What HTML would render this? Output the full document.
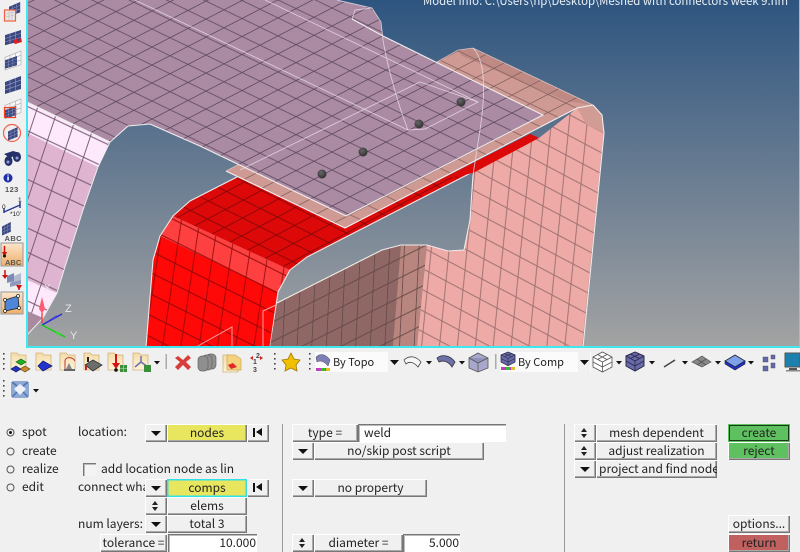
<!DOCTYPE html>
<html><head><meta charset="utf-8">
<style>
html,body{margin:0;padding:0;background:#f0f0f0}
#r{position:relative;width:800px;height:552px;overflow:hidden;background:#f0f0f0;font-family:"Noto Sans CJK JP","Liberation Sans",sans-serif;font-size:12px;color:#222}
svg{position:absolute;left:0;top:0}
.b,.t,.i{position:absolute;box-sizing:border-box;white-space:nowrap;overflow:hidden}
.b{background:#f0f0f0;text-align:center;box-shadow:inset 1px 1px 0 #fff,inset -1px -1px 0 #777,inset -2px -2px 0 #aaa;line-height:17px}
.y{background:#e8e65f}
.g{background:#5fc060}
.t{line-height:14px}
.i{background:#fff;box-shadow:inset 1px 1px 0 #777,inset 2px 2px 0 #bbb;line-height:18px;padding:0 1px}
.dn::after{content:"";position:absolute;left:6px;top:7px;width:0;height:0;border-style:solid;border-color:#111 transparent transparent;border-width:5px 5px 0}
.ud::before{content:"";position:absolute;left:7px;top:4px;width:0;height:0;border-style:solid;border-color:transparent transparent #222;border-width:0 3px 4px}
.ud::after{content:"";position:absolute;left:7px;top:10px;width:0;height:0;border-style:solid;border-color:#222 transparent transparent;border-width:4px 3px 0}
.fs::before{content:"";position:absolute;left:6px;top:4px;width:2px;height:9px;background:#111}
.fs::after{content:"";position:absolute;left:9px;top:4px;width:0;height:0;border-style:solid;border-color:transparent #111 transparent transparent;border-width:4.5px 6px 4.5px 0}
</style></head><body><div id="r">
<svg width="800" height="552" viewBox="0 0 800 552">
<defs>
<linearGradient id="bg" x1="0" y1="0" x2="0" y2="1"><stop offset="0" stop-color="#2e5580"/><stop offset="1" stop-color="#a3a3a3"/></linearGradient>
<linearGradient id="fo" x1="0" y1="0" x2="0" y2="1"><stop offset="0" stop-color="#f5dca8"/><stop offset="1" stop-color="#fdf4dc"/></linearGradient>
<linearGradient id="or" x1="0" y1="0" x2="0" y2="1"><stop offset="0" stop-color="#fbe6cc"/><stop offset="1" stop-color="#f0ae6a"/></linearGradient>
<pattern id="pPlate" patternUnits="userSpaceOnUse" width="100" height="100" patternTransform="matrix(.18 .087 .18 -.093 314 152.300)"><path d="M0 50H100M50 0V100" fill="none" stroke="#5c4a5e" stroke-width="5"/></pattern>
<pattern id="pLeft" patternUnits="userSpaceOnUse" width="100" height="100" patternTransform="matrix(.18 .085 -.07 .21 31 96)"><path d="M0 50H100M50 0V100" fill="none" stroke="#6f5468" stroke-width="4.500"/></pattern>
<pattern id="pRed" patternUnits="userSpaceOnUse" width="100" height="100" patternTransform="matrix(.17 .085 -.03 .2 171 229)"><path d="M0 50H100M50 0V100" fill="none" stroke="#8c0808" stroke-width="4.500"/></pattern>
<pattern id="pDark" patternUnits="userSpaceOnUse" width="100" height="100" patternTransform="matrix(.17 .085 .18 -.095 172 229)"><path d="M0 50H100M50 0V100" fill="none" stroke="#7c0808" stroke-width="5"/></pattern>
<pattern id="pBrown" patternUnits="userSpaceOnUse" width="100" height="100" patternTransform="matrix(.15 -.075 -.01 .2 277 310)"><path d="M0 50H100M50 0V100" fill="none" stroke="#5f4644" stroke-width="5"/></pattern>
<pattern id="pSal" patternUnits="userSpaceOnUse" width="100" height="100" patternTransform="matrix(.17 .09 -.02 .2 560.500 120.500)"><path d="M0 50H100M50 0V100" fill="none" stroke="#956c6c" stroke-width="5"/></pattern>
<pattern id="pFl" patternUnits="userSpaceOnUse" width="100" height="100" patternTransform="matrix(.18 .087 .18 -.093 314 152.300)"><path d="M0 50H100M50 0V100" fill="none" stroke="#86615d" stroke-width="5"/></pattern>
<g id="mesh"><polygon points="0,6 16,0 16,13 0,18" fill="#3b4880"/><path d="M0 10L16 4M0 14L16 8.500M5 4V16M10.500 2V15" stroke="#8a94c0" stroke-width=".7" fill="none"/></g>
<g id="wire"><path d="M0 6L16 0V13L0 18ZM0 10L16 4M0 14L16 8.500M5 4V16M10.500 2V15" stroke="#aaa" stroke-width=".6" fill="#f6f6f6"/></g>
<g id="fold"><path d="M1 3V1H7L9 3H16V18H1Z" fill="url(#fo)" stroke="#d2b27a" stroke-width=".8"/></g>
<path id="arr" d="M0 0H6L3 3.500Z" fill="#111"/>
<g id="cube3"><polygon points="9,0 18,4 18,14 9,19 0,14 0,4" fill="#6a6aa6" stroke="#2a2a50" stroke-width="1"/><path d="M0 4L9 9L18 4M9 9V19M4.500 2L13.500 6.500M13.500 2L4.500 6.500M0 9L9 14L18 9" stroke="#2a2a50" stroke-width=".8" fill="none"/></g>
<g id="grip" fill="#444"><rect x="0" y="0" width="1.600" height="1.600"/><rect x="0" y="5" width="1.600" height="1.600"/><rect x="0" y="10" width="1.600" height="1.600"/><rect x="0" y="15" width="1.600" height="1.600"/></g>
<radialGradient id="dot" cx=".4" cy=".35" r=".7"><stop offset="0" stop-color="#666"/><stop offset="1" stop-color="#2e2e2e"/></radialGradient>
</defs>

<!-- viewport -->
<rect x="27" y="0" width="772" height="347" fill="url(#bg)"/>

<!-- left flange -->
<polygon points="27,102 110,142 98,167 83,210 64,270 57,293 43,318 27,335" fill="#dfb4d0"/>
<polygon points="27,102 110,142 98,167 27,133" fill="#fde8fc"/>
<polygon points="27,280 57,293 43,318 27,311" fill="#fde8fc"/>
<polygon points="27,311 43,318 27,335" fill="#a98a9f"/>
<polygon points="27,102 110,142 98,167 83,210 64,270 57,293 43,318 27,311" fill="url(#pLeft)"/>
<path d="M27 102L110 142L98 167L83 210L64 270L57 293L43 318L27 335" fill="none" stroke="#eee" stroke-width="1"/>

<!-- red part -->
<polygon points="190,201 237,177 345,228 530,134 539,138 307,257 290,270 173,216" fill="#dd0808"/>
<polygon points="190,201 237,177 345,228 530,134 539,138 307,257 290,270 173,216" fill="url(#pDark)"/>
<polygon points="160,236 173,216 290,270 278,292" fill="#ff4040"/>
<polygon points="160,236 278,292 270,347 146,347 153,260" fill="#ff0808"/>
<polygon points="160,236 173,216 290,270 278,292 270,347 146,347 153,260" fill="url(#pRed)"/>
<path d="M146 347L153 260L160 236L173 216L190 201L237 177M539 138L307 257L290 270L278 292L270 347" fill="none" stroke="#f0e8e8" stroke-width="1.100"/>
<path d="M196 347L232 327V347M263 347V311L276 305" fill="none" stroke="#f5a0a0" stroke-width="1"/>

<!-- brown face -->
<polygon points="277,303 382,250 401,245 393,347 270,347" fill="#8f6866"/>
<polygon points="277,303 382,250 401,245 393,347 270,347" fill="url(#pBrown)"/>
<polygon points="401,245 427,245 417,347 393,347" fill="#b8857f"/>
<polygon points="401,245 427,245 417,347 393,347" fill="url(#pBrown)"/>

<!-- salmon face -->
<polygon points="427,245 448,251 464,250 470,220 473,172 539,138 577,108 593,105 604,133 583,347 417,347" fill="#eeaaa6"/>
<polygon points="427,245 448,251 464,250 470,220 473,172 539,138 577,108 593,105 604,133 583,347 417,347" fill="url(#pSal)"/>
<polygon points="577,108 593,105 602,115 604,133 586,124" fill="#d19c94"/>
<path d="M277 303L382 250L401 245L427 245L448 251L464 250L470 220L473 175M593 105L602 115L604 133L583 347" fill="none" stroke="#f0ecec" stroke-width="1.100"/>
<polygon points="473,173 539,138 530,134 440,180" fill="#dd0808"/>

<!-- top flange under plate -->
<polygon points="226,171 437,62 458,50 473,48 593,105 577,108 345,228" fill="#cf9a94"/>
<polygon points="473,48 593,105 566,101 462,56 458,50" fill="#bf8a84"/>
<polygon points="226,171 437,62 458,50 473,48 593,105 577,108 345,228" fill="url(#pFl)"/>
<path d="M226 171L345 228L577 108L593 105" fill="none" stroke="#f5f0f0" stroke-width="1.100"/>
<path d="M226 171L437 62L458 50L473 48L593 105" fill="none" stroke="#eadada" stroke-width=".8" stroke-opacity=".7"/>

<!-- main plate -->
<polygon points="27,0 337,0 372,8 381,22 383,36 543,115 346,216 200,146 150,124 128,126 110,142 27,102" fill="#ab8aa3"/>
<polygon points="27,0 337,0 372,8 381,22 383,36 543,115 346,216 200,146 150,124 128,126 110,142 27,102" fill="url(#pPlate)"/>
<path d="M352 19L383 36L543 115L346 216L200 146L150 124L128 126L110 142L27 102" fill="none" stroke="#eee" stroke-width="1.100"/>
<g fill="none" stroke="#e8dce6" stroke-width=".9" stroke-opacity=".8">
<path d="M337 0L372 8L381 22L383 40C388 70 400 110 408 130L425 129L478 102L265 0"/>
<path d="M135 0L408 130"/>
<path d="M352 19L355 10L372 8"/>
<path d="M240 170L420 82L478 102"/>
<path d="M473 48C485 60 486 90 480 130L473 175"/>
</g>
<g fill="url(#dot)"><circle cx="322" cy="174" r="4.500"/><circle cx="363" cy="152" r="4.500"/><circle cx="419" cy="124" r="4.500"/><circle cx="461" cy="102" r="4.500"/></g>

<!-- axes -->
<path d="M42 323V303" stroke="#ff3030" stroke-width="1.300"/><polygon points="42,297 45,309 42,313 39,309" fill="#ff5a70"/>
<path d="M42 325L62 314" stroke="#2525e0" stroke-width="1.300"/><polygon points="49,320 57,315 55,319" fill="#4040e0"/>
<path d="M42 325L65 337" stroke="#10d010" stroke-width="1.300"/><polygon points="54,330 62,334 58,335" fill="#30e030"/>
<g font-family="'Liberation Sans',sans-serif" font-size="10" fill="#e6e6e6"><text x="44" y="291">X</text><text x="65" y="312" font-size="11">Z</text><text x="70" y="339" font-size="11">Y</text></g>
<text x="423" y="5" font-size="12" fill="#e8eef4" textLength="370" lengthAdjust="spacingAndGlyphs">Model Info: C:\Users\hp\Desktop\Meshed with connectors week 9.hm*</text>

<!-- cyan frame -->
<rect x="26" y="0" width="2" height="348" fill="#3fe8ee"/>
<rect x="26" y="346" width="774" height="2" fill="#3fe8ee"/>
<rect x="799" y="0" width="1" height="348" fill="#3fe8ee"/>

<!-- left toolbar -->
<use href="#mesh" transform="translate(9 2) scale(.7 .8)"/><rect x="4.500" y="10" width="11" height="11" fill="#e8e8e8" stroke="#f06040" stroke-width="1.200"/><path d="M6 14L14 12M6 17L14 15M9 11V20M12 11V20" stroke="#bbb" stroke-width=".6"/>
<use href="#mesh" transform="translate(5 30) scale(1 .85)"/><path d="M13 42C18 43 20 41 21 37L22 42L15 44Z" fill="#e02020"/><path d="M13 41L17 38V44Z" fill="#e02020"/>
<use href="#wire" transform="translate(5 51) scale(1 1.050)"/><use href="#mesh" transform="translate(5 56) scale(.75 .7)"/>
<use href="#mesh" transform="translate(5 76)"/>
<use href="#wire" transform="translate(5 99) scale(1 1.050)"/><use href="#mesh" transform="translate(5 106) scale(.7 .7)"/><rect x="4.500" y="107.500" width="11" height="10" fill="none" stroke="#f04020" stroke-width="1.200"/>
<circle cx="12" cy="133" r="8.500" fill="#eee" stroke="#f06050" stroke-width="1.200"/><use href="#mesh" transform="translate(8 127) scale(.6 .75)"/>
<g fill="#25306a"><ellipse cx="8.500" cy="161" rx="4" ry="5"/><ellipse cx="17" cy="157" rx="4" ry="5"/><path d="M4 154L13 151L20 153L10 158Z"/></g><circle cx="8" cy="162" r="1.500" fill="#8fa0e0"/><circle cx="17" cy="158" r="1.500" fill="#8fa0e0"/>
<circle cx="8" cy="178" r="4.500" fill="#1c2fa8"/><rect x="7.300" y="176.500" width="1.500" height="4" fill="#fff"/><rect x="7.300" y="174.500" width="1.500" height="1" fill="#fff"/>
<g font-family="'Liberation Sans',sans-serif" font-weight="bold" fill="#555" font-size="7.500"><text x="5" y="192" letter-spacing=".4">123</text><text x="4.500" y="241" letter-spacing=".4">ABC</text></g>
<g font-family="'Liberation Sans',sans-serif" fill="#222" font-size="6.500"><text x="2" y="209">0</text><text x="18" y="202">1</text><text x="10" y="216">*10'</text></g>
<path d="M4 212L20 205M4 208V213M20 202V208" stroke="#2b3c90" stroke-width="1.500" fill="none"/>
<use href="#mesh" transform="translate(2 222) scale(.55 .75)"/>
<rect x="1" y="243" width="22" height="23" fill="url(#or)" stroke="#999" stroke-width="1"/><path d="M4.500 246V254" stroke="#d01010" stroke-width="1.500"/><polygon points="2,252 7,252 4.500,257" fill="#d01010"/><circle cx="4.500" cy="256" r="1.500" fill="#111"/><text x="5" y="265" font-family="'Liberation Sans',sans-serif" font-weight="bold" font-size="7.500" fill="#555">ABC</text>
<polygon points="7,276 14,273 14,281 7,283" fill="#7d8ab5"/><polygon points="10,283 21,277 21,284 10,287" fill="#8e99bb"/><polygon points="14,276 21,273 21,280 14,282" fill="#b3bacf"/><path d="M5 270V277" stroke="#d01010" stroke-width="1.500"/><polygon points="2,275 8,275 5,279" fill="#d01010"/><path d="M19 285V290" stroke="#d01010" stroke-width="1.500"/><polygon points="16,285 22,285 19,290" fill="#d01010"/>
<rect x="1" y="292" width="22" height="22" fill="url(#or)" stroke="#999" stroke-width="1"/><polygon points="5,300 18,296 19,308 5,311" fill="#4f87d8" stroke="#222" stroke-width=".8"/><g fill="#fff" stroke="#222" stroke-width=".7"><circle cx="5" cy="300" r="1.500"/><circle cx="18" cy="296" r="1.500"/><circle cx="19" cy="308" r="1.500"/><circle cx="5" cy="311" r="1.500"/></g>

<!-- toolbar row 1 -->
<use href="#grip" x="3" y="353"/>
<use href="#fold" x="10" y="352"/><polygon points="21,359 26,362 21,365 16,362" fill="#20b020" stroke="#145c14" stroke-width=".6"/><polygon points="16,366 21,369 16,372 11,369" fill="#2030c0" stroke="#101a60" stroke-width=".6"/><polygon points="25,366 30,369 25,372 20,369" fill="#c98a30" stroke="#604010" stroke-width=".6"/>
<use href="#fold" x="35" y="352"/><polygon points="43,361 52,366 43,371 38,366" fill="#2434d0" stroke="#111a70" stroke-width=".8"/>
<use href="#fold" x="59" y="352"/><path d="M65 369V361C65 357 72 356 75 361" fill="none" stroke="#c03030" stroke-width="1"/><path d="M66 369L69 363L72 369Z" fill="#888"/><rect x="64" y="369" width="11" height="2" fill="#666"/>
<use href="#fold" x="83" y="352"/><polygon points="93,360 102,365 93,371 85,365" fill="#6d6d6d" stroke="#333" stroke-width=".8"/><rect x="87" y="357" width="2" height="5" fill="#222"/><rect x="85" y="366" width="2" height="4" fill="#c02020"/>
<use href="#fold" x="107" y="352"/><path d="M116 354V365" stroke="#d81010" stroke-width="2"/><polygon points="112,363 120,363 116,369" fill="#d81010"/><circle cx="116" cy="370" r="1.800" fill="#111"/><rect x="120" y="365" width="7" height="7" fill="#3a8f3a"/><path d="M120 368.500H127M123.500 365V372" stroke="#bde0bd" stroke-width=".6"/>
<use href="#fold" x="132" y="352"/><path d="M141 362V356M141 362L135 367M141 362L148 367" stroke="#6a6fb0" stroke-width="1.500" fill="none"/><rect x="144" y="365" width="7" height="7" fill="#3a8f3a"/>
<use href="#arr" x="154" y="361"/>
<rect x="165.500" y="354" width="1.500" height="15" fill="#aaa"/>
<path d="M178 356L183 360L188 355L191 358L186 362L191 367L188 370L183 365L178 370L175 367L180 362L175 358Z" fill="#d83c3c"/>
<g fill="#8f8f8f" stroke="#666" stroke-width=".7"><rect x="206" y="354" width="10" height="15" rx="4"/><rect x="202" y="355" width="10" height="15" rx="4"/><rect x="198" y="356" width="10" height="15" rx="4"/></g>
<use href="#fold" x="222" y="354"/><path d="M227 355H235L241 359V370H227Z" fill="#f5d27e" stroke="#c9a45a" stroke-width=".7"/><path d="M228 365L233 363L237 367L231 369Z" fill="#e02828"/>
<g font-family="'Liberation Sans',sans-serif" font-size="7" font-weight="bold" fill="#444"><text x="256" y="358">2</text><text x="253" y="364">1</text><text x="253" y="372">3</text></g><path d="M250 358L253 356V360ZM263 358L260 356V360Z" fill="#d02020"/>
<use href="#grip" x="274" y="353"/>
<polygon points="291,353 294,359 300,360 296,365 297,371 291,368 285,371 286,365 282,360 288,359" fill="#f0c000" stroke="#a07800" stroke-width=".8"/>
<use href="#grip" x="309" y="353"/>
<rect x="315" y="352" width="85" height="20" fill="#fbfbfb"/><rect x="388" y="352" width="12" height="20" fill="#f0f0f0"/>
<path d="M316 357C320 353 326 354 330 360L328 366C324 361 320 360 317 362Z" fill="#7d80b8" stroke="#444" stroke-width=".5"/><rect x="316" y="368" width="14" height="3" fill="#c040c0"/><rect x="321" y="368" width="4" height="3" fill="#30c030"/><rect x="326" y="368" width="4" height="3" fill="#e0c020"/>
<polygon points="390,360 399,360 394.500,365" fill="#111"/>
<text x="333" y="366" font-size="11" fill="#222">By Topo</text>
<path d="M404 360C409 355 416 356 421 362L418 367C414 362 409 361 406 364Z" fill="#f6f6f6" stroke="#444" stroke-width=".8"/><use href="#arr" x="426" y="361"/>
<path d="M437 358C442 354 450 355 455 362L452 367C448 361 443 360 439 362Z" fill="#6e70a8" stroke="#333" stroke-width=".8"/><use href="#arr" x="459" y="361"/>
<polygon points="478,353 488,358 488,368 478,372 469,368 469,358" fill="#a8a8cc" stroke="#555" stroke-width=".8"/><path d="M469 358L478 363L488 358M478 363V372" stroke="#555" stroke-width=".8" fill="#9090bb"/>
<rect x="495" y="354" width="1.500" height="15" fill="#aaa"/>
<rect x="500" y="352" width="91" height="20" fill="#fbfbfb"/><rect x="578" y="352" width="12" height="20" fill="#f0f0f0"/>
<use href="#cube3" transform="translate(501 352) scale(.78 .72)"/><rect x="501" y="367" width="14" height="3" fill="#c040c0"/><rect x="506" y="367" width="4" height="3" fill="#30c030"/><rect x="511" y="367" width="4" height="3" fill="#e0c020"/>
<polygon points="580,360 589,360 584.500,365" fill="#111"/>
<text x="518" y="366" font-size="11" fill="#222">By Comp</text>
<g fill="#fff" stroke="#555" stroke-width=".8"><polygon points="602.500,352 612,357 612,367 602.500,372 593,367 593,357"/><path d="M593 357L602.500 362L612 357M602.500 362V372M593 362L602.500 367L612 362M597.500 354.500L607 359.500M607 354.500L597.500 359.500" fill="none"/></g><use href="#arr" x="616" y="361"/>
<use href="#cube3" x="626" y="352"/><use href="#arr" x="649" y="361"/>
<path d="M664 367L675 360" stroke="#444" stroke-width="1.500"/><use href="#arr" x="682" y="361"/>
<polygon points="702,356 711,362 702,367 692,362" fill="#888" stroke="#555" stroke-width=".7"/><path d="M697 359L706 365M706 359L697 365" stroke="#444" stroke-width=".7"/><use href="#arr" x="715" y="361"/>
<polygon points="735,355 745,361 735,367 725,361" fill="#7ea0e8" stroke="#223" stroke-width=".8"/><polygon points="725,361 735,367 745,361 745,364 735,370 725,364" fill="#2030c8" stroke="#223" stroke-width=".6"/><use href="#arr" x="748" y="361"/>
<g fill="#6468b0" stroke="#444" stroke-width=".4"><rect x="763" y="357" width="5" height="5"/><rect x="771" y="355" width="4" height="4"/><rect x="763" y="366" width="5" height="5"/><rect x="771" y="363" width="4" height="5"/></g>
<rect x="785" y="353" width="15" height="14" fill="#1d7fae" stroke="#555" stroke-width="1"/><rect x="789" y="368" width="8" height="2" fill="#555"/><rect x="786" y="370" width="14" height="1.500" fill="#888"/>

<!-- toolbar row 2 -->
<use href="#grip" x="3" y="380"/>
<rect x="11" y="381" width="18" height="17" rx="3" fill="#8fa9d4"/><polygon points="20,384 26,389 20,395 14,389" fill="#eef2f8"/><path d="M12 382L17 386M28 382L23 386M12 397L17 392M28 397L23 392" stroke="#4f74ad" stroke-width="1.500"/>
<use href="#arr" x="33" y="389"/>

<!-- panel separators -->
<rect x="282" y="424" width="1" height="128" fill="#999"/>
<rect x="564" y="424" width="1" height="128" fill="#999"/>

<!-- radios -->
<g fill="#f0f0f0" stroke="#555" stroke-width="1"><circle cx="10.500" cy="432.500" r="3.500"/><circle cx="10.500" cy="451.500" r="3.500"/><circle cx="10.500" cy="469.500" r="3.500"/><circle cx="10.500" cy="487.500" r="3.500"/></g>
<circle cx="10.500" cy="432.500" r="1.500" fill="#111"/>
</svg>

<div class="t" style="left:22px;top:425px">spot</div>
<div class="t" style="left:22px;top:444px">create</div>
<div class="t" style="left:22px;top:462px">realize</div>
<div class="t" style="left:22px;top:480px">edit</div>
<div class="t" style="left:78px;top:425px">location:</div>
<div class="t" style="left:78px;top:480px;width:67px">connect what</div>
<div class="t" style="left:78px;top:517px">num layers:</div>
<div class="i" style="left:83px;top:463px;width:13px;height:13px;background:#f4f4f4"></div>
<div class="t" style="left:101px;top:462px">add location node as lin</div>

<div class="b dn" style="left:145px;top:424px;width:22px;height:18px"></div>
<div class="b y" style="left:167px;top:424px;width:80px;height:18px">nodes</div>
<div class="b fs" style="left:247px;top:424px;width:22px;height:18px"></div>
<div class="b dn" style="left:145px;top:479px;width:22px;height:18px"></div>
<div class="b y" style="left:167px;top:479px;width:80px;height:18px;box-shadow:inset 0 0 0 1.500px #30e0e8">comps</div>
<div class="b fs" style="left:247px;top:479px;width:22px;height:18px"></div>
<div class="b ud" style="left:145px;top:497px;width:22px;height:18px"></div>
<div class="b" style="left:167px;top:497px;width:80px;height:18px">elems</div>
<div class="b dn" style="left:145px;top:515px;width:22px;height:18px"></div>
<div class="b" style="left:167px;top:515px;width:80px;height:18px">total 3</div>
<div class="b" style="left:100px;top:534px;width:67px;height:18px">tolerance =</div>
<div class="i" style="left:168px;top:534px;width:89px;height:18px;text-align:right">10.000</div>

<div class="b" style="left:292px;top:424px;width:66px;height:18px">type =</div>
<div class="i" style="left:358px;top:424px;width:148px;height:18px;padding-left:6px">weld</div>
<div class="b dn" style="left:292px;top:442px;width:22px;height:18px"></div>
<div class="b" style="left:314px;top:442px;width:170px;height:18px">no/skip post script</div>
<div class="b dn" style="left:292px;top:479px;width:22px;height:18px"></div>
<div class="b" style="left:314px;top:479px;width:113px;height:18px">no property</div>
<div class="b ud" style="left:292px;top:534px;width:22px;height:18px"></div>
<div class="b" style="left:314px;top:534px;width:89px;height:18px">diameter =</div>
<div class="i" style="left:403px;top:534px;width:57px;height:18px;text-align:right">5.000</div>

<div class="b ud" style="left:574px;top:424px;width:22px;height:18px"></div>
<div class="b" style="left:596px;top:424px;width:121px;height:18px">mesh dependent</div>
<div class="b ud" style="left:574px;top:442px;width:22px;height:18px"></div>
<div class="b" style="left:596px;top:442px;width:121px;height:18px">adjust realization</div>
<div class="b dn" style="left:574px;top:460px;width:22px;height:18px"></div>
<div class="b" style="left:596px;top:460px;width:121px;height:18px;text-align:left;padding-left:3px">project and find nodes</div>

<div class="b g" style="left:728px;top:424px;width:62px;height:18px;box-shadow:inset 0 0 0 1px #5fc060,inset 0 0 0 2px #153a15">create</div>
<div class="b g" style="left:728px;top:442px;width:62px;height:18px">reject</div>
<div class="b" style="left:728px;top:515px;width:62px;height:18px">options...</div>
<div class="b" style="left:728px;top:534px;width:62px;height:18px;background:#c0605f">return</div>
</div></body></html>
